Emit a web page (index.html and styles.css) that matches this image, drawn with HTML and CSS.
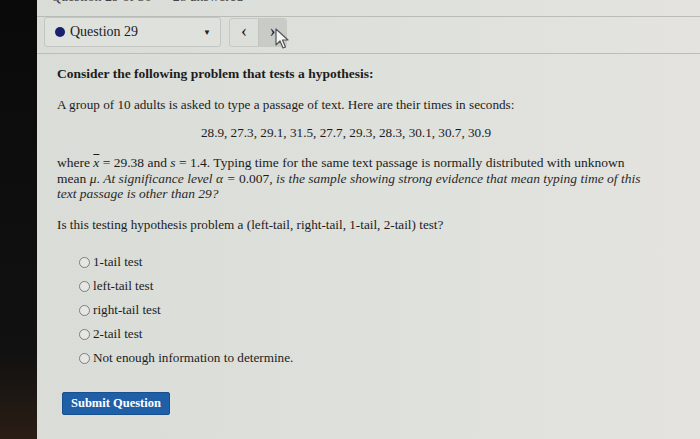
FILE: index.html
```html
<!DOCTYPE html>
<html>
<head>
<meta charset="utf-8">
<link rel="stylesheet" href="styles.css">
</head>
<body>
<div class="screen">
  <div class="bezel"></div>
  <div class="page">
    <div class="topstrip"><span class="cut">Question 29 of 30 &mdash; 28 answered</span></div>
    <div class="toolbar">
      <div class="qselect">
        <span class="dot"></span>
        <span class="qlabel">Question 29</span>
        <span class="caret">&#9660;</span>
      </div>
      <div class="nav">
        <span class="navbtn">&lsaquo;</span>
        <span class="navbtn active">&rsaquo;</span>
      </div>
      <svg class="cursor" width="14" height="22" viewBox="0 0 14 22">
        <path d="M1 1 L1 17 L5 13 L8 20 L10.5 19 L7.5 12 L13 12 Z" fill="#f4f4f2" stroke="#555" stroke-width="1.2" stroke-linejoin="round"/>
      </svg>
    </div>
    <div class="content">
      <p class="title">Consider the following problem that tests a hypothesis:</p>
      <p class="intro">A group of 10 adults is asked to type a passage of text. Here are their times in seconds:</p>
      <p class="data">28.9, 27.3, 29.1, 31.5, 27.7, 29.3, 28.3, 30.1, 30.7, 30.9</p>
      <p class="where">where <span class="m bar">x</span> = 29.38 and <span class="m">s</span> = 1.4. Typing time for the same text passage is normally distributed with unknown mean <span class="m">μ</span>. <span class="it">At significance level <span class="m">α</span> = </span>0.007<span class="it">, is the sample showing strong evidence that mean typing time of this text passage is other than 29?</span></p>
      <p class="ask">Is this testing hypothesis problem a (left-tail, right-tail, 1-tail, 2-tail) test?</p>
      <ul class="options">
        <li><span class="radio"></span>1-tail test</li>
        <li><span class="radio"></span>left-tail test</li>
        <li><span class="radio"></span>right-tail test</li>
        <li><span class="radio"></span>2-tail test</li>
        <li><span class="radio"></span>Not enough information to determine.</li>
      </ul>
      <button class="submit">Submit Question</button>
    </div>
  </div>
</div>
</body>
</html>
```
FILE: styles.css
```css
html, body {
  margin: 0;
  padding: 0;
  width: 700px;
  height: 439px;
  overflow: hidden;
}
body {
  font-family: "Liberation Serif", "Times New Roman", serif;
  color: #1c1c1c;
}
.screen {
  display: flex;
  height: 439px;
}
.bezel {
  width: 37px;
  flex: none;
  background: linear-gradient(180deg, #0a0a0a 0%, #111 80%, #2a1d15 100%);
}
.page {
  flex: 1;
  background: linear-gradient(90deg, #d9dcd7 0%, #dfe1dc 60%, #e4e3df 100%);
  position: relative;
}
.topstrip {
  height: 16px;
  overflow: hidden;
  border-bottom: 1px solid #b9bcb7;
  display: flex;
  align-items: flex-end;
  padding-left: 14px;
}
.cut {
  font-size: 14px;
  line-height: 14px;
  margin-bottom: 12px;
  color: #444;
}
.toolbar {
  height: 36px;
  border-bottom: 1px solid #babdb8;
  display: flex;
  align-items: flex-start;
  gap: 8px;
  padding-left: 7px;
  position: relative;
}
.qselect {
  width: 177px;
  height: 30px;
  box-sizing: border-box;
  border: 1px solid #c4c6c2;
  border-radius: 3px;
  display: flex;
  align-items: center;
  padding: 0 9px 0 10px;
  background: #dfe1dd;
}
.dot {
  width: 10px;
  height: 10px;
  border-radius: 50%;
  background: #1a1f6e;
  margin-right: 5px;
}
.qlabel {
  font-size: 14px;
  flex: 1;
}
.caret {
  font-size: 8px;
  color: #222;
}
.nav {
  display: flex;
  height: 29px;
  border: 1px solid #c7c9c5;
  border-radius: 3px;
  box-sizing: border-box;
  overflow: hidden;
  margin-top: 1px;
}
.navbtn {
  width: 28px;
  display: flex;
  align-items: center;
  justify-content: center;
  font-size: 18px;
  line-height: 1;
  padding-bottom: 3px;
  box-sizing: border-box;
}
.navbtn.active {
  background: #c9cbc6;
  border-left: 1px solid #c2c4c0;
}
.cursor {
  position: absolute;
  left: 238px;
  top: 11px;
}
.content {
  padding: 8px 0 0 20px;
  font-size: 13.2px;
}
p {
  margin: 0;
}
.title {
  font-weight: bold;
  font-size: 13.5px;
  height: 31px;
  margin-top: 4px;
}
.intro {
  height: 28px;
}
.data {
  text-align: center;
  width: 578px;
  height: 30px;
}
.where {
  width: 590px;
  font-size: 13.5px;
  line-height: 15.5px;
  height: 62px;
}
.m {
  font-style: italic;
  font-family: "Liberation Serif", serif;
}
.bar {
  text-decoration: overline;
}
.it {
  font-style: italic;
  font-family: "Liberation Serif", serif;
  font-size: 13.5px;
  color: #2a2a2a;
}
.ask {
  height: 31px;
}
.options {
  list-style: none;
  margin: 0;
  padding: 2px 0 0 22px;
}
.options li {
  height: 24px;
  display: flex;
  align-items: center;
}
.radio {
  width: 11px;
  height: 11px;
  border-radius: 50%;
  border: 1px solid #7c7f7c;
  box-sizing: border-box;
  margin-right: 3px;
  background: #e6e7e3;
}
.submit {
  margin: 22px 0 0 5px;
  background: #1f5fa8;
  color: #fff;
  border: 1px solid #174f8f;
  border-radius: 2px;
  font-family: "Liberation Serif", serif;
  font-weight: bold;
  font-size: 12.5px;
  padding: 3px 8px 3px;
}
```
